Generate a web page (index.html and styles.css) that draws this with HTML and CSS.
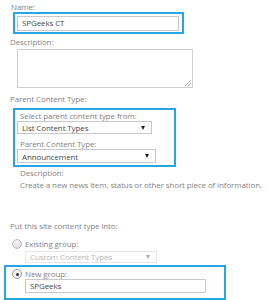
FILE: index.html
```html
<!DOCTYPE html>
<html>
<head>
<meta charset="utf-8">
<link rel="stylesheet" href="styles.css">
</head>
<body>
<div class="page">
  <div class="lbl l-name">Name:</div>
  <div class="hl hl-name">
    <div class="field f-name">SPGeeks CT</div>
  </div>
  <div class="lbl l-desc">Description:</div>
  <div class="textarea"><span class="grip"></span></div>
  <div class="lbl l-pct">Parent Content Type:</div>
  <div class="hl hl-pct">
    <div class="lbl sub l-from">Select parent content type from:</div>
    <div class="field select s-from">List Content Types<span class="arrow"></span></div>
    <div class="lbl sub l-type">Parent Content Type:</div>
    <div class="field select s-type">Announcement<span class="arrow"></span></div>
  </div>
  <div class="lbl sub l-d2">Description:</div>
  <div class="lbl sub l-info">Create a new news item, status or other short piece of information.</div>
  <div class="lbl l-put">Put this site content type into:</div>
  <div class="radio-row r-existing"><span class="radio"></span><span class="lbl">Existing group:</span></div>
  <div class="field select disabled s-existing">Custom Content Types<span class="arrow"></span></div>
  <div class="hl hl-new">
    <div class="radio-row r-new"><span class="radio checked"></span><span class="lbl">New group:</span></div>
    <div class="field f-new">SPGeeks</div>
  </div>
</div>
</body>
</html>
```
FILE: styles.css
```css
html, body {
  margin: 0;
  padding: 0;
  background: #ffffff;
}
.page {
  width: 269px;
  height: 300px;
  overflow: hidden;
  font-family: "Open Sans", "Noto Sans", sans-serif;
  font-size: 8px;
  letter-spacing: -0.12px;
  color: #808080;
}
.lbl {
  height: 10px;
  line-height: 10px;
  white-space: nowrap;
  color: #858585;
}
.hl {
  border: 2px solid #24a5e4;
  box-sizing: border-box;
}
.field {
  box-sizing: border-box;
  border: 1px solid #c8c8c8;
  background: #fff;
  color: #4a4a4a;
  line-height: 12px;
  padding-left: 4px;
  position: relative;
  white-space: nowrap;
}
.l-name { margin: 2px 0 0 11px; }
.hl-name {
  margin: 0 0 0 13px;
  width: 171px;
  height: 22px;
  padding: 2px 0 0 2px;
}
.f-name { width: 162px; height: 15px; }
.l-desc { margin: 3px 0 0 10px; }
.textarea {
  margin: 2px 0 0 17px;
  width: 176px;
  height: 39px;
  box-sizing: border-box;
  border: 1px solid #d0d0d0;
  position: relative;
}
.grip {
  position: absolute;
  right: 1px;
  bottom: 1px;
  width: 6px;
  height: 6px;
  background: linear-gradient(135deg, transparent 0 45%, #b0b0b0 45% 55%, transparent 55% 70%, #b0b0b0 70% 80%, transparent 80%);
}
.l-pct { margin: 6px 0 0 10px; }
.hl-pct {
  margin: 4px 0 0 13px;
  width: 163px;
  height: 59px;
  padding: 1px 0 0 2px;
}
.sub { padding-left: 3px; }
.select { padding-right: 14px; }
.arrow {
  position: absolute;
  right: 6px;
  top: 4px;
  width: 0;
  height: 0;
  border-left: 2.5px solid transparent;
  border-right: 2.5px solid transparent;
  border-top: 4px solid #222;
}
.s-from { width: 135px; height: 13px; }
.l-type { margin-top: 5px; }
.s-type { width: 139px; height: 14px; line-height: 13px; }
.l-d2 { margin: 1px 0 0 17px; }
.l-info { margin: 2px 0 0 17px; }
.l-put { margin: 31px 0 0 10px; }
.radio-row {
  display: flex;
  align-items: center;
  gap: 3px;
  height: 10px;
}
.r-existing { margin: 8px 0 0 12px; }
.radio {
  width: 10px;
  height: 10px;
  box-sizing: border-box;
  border-radius: 50%;
  border: 1px solid #bdbdbd;
  background: radial-gradient(circle at 40% 35%, #f6f6f6, #d4d4d4);
  position: relative;
}
.radio.checked {
  background: #f2f2f2;
  border-color: #9c9c9c;
}
.radio.checked::after {
  content: "";
  position: absolute;
  left: 2.5px;
  top: 2.5px;
  width: 3px;
  height: 3px;
  border-radius: 50%;
  background: #333;
}
.s-existing {
  margin: 2px 0 0 25px;
  width: 132px;
  height: 12px;
  line-height: 10px;
  border-color: #e6e6e6;
  color: #b8b8b8;
}
.disabled .arrow { border-top-color: #aaa; top: 3px; }
.hl-new {
  margin: 2px 0 0 4px;
  width: 222px;
  height: 35px;
  padding: 2px 0 0 6px;
}
.f-new { margin: 0 0 0 13px; width: 181px; height: 14px; line-height: 12px; }
```
